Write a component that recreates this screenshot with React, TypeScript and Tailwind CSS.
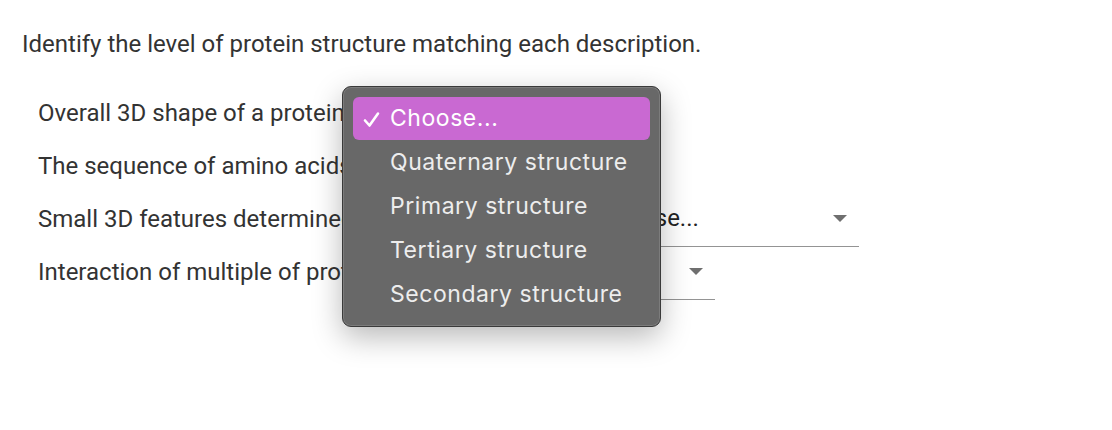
const options = ['Quaternary structure', 'Primary structure', 'Tertiary structure', 'Secondary structure']

const rows = [
  { label: 'Overall 3D shape of a protein' },
  { label: 'The sequence of amino acids' },
  { label: 'Small 3D features determined by hydrogen bonding' },
  { label: 'Interaction of multiple of protein units' },
]

function Select() {
  return (
    <div className="ml-[12px] flex h-[56px] w-[264px] shrink-0 items-center justify-between border-b border-[#949494] pl-1 pr-[12px] text-[24px] text-[#222]">
      <span>Choose...</span>
      <svg width="14" height="8" viewBox="0 0 14 8" className="mt-[2px]">
        <path d="M0 0h14L7 7z" fill="#6f6f6f" />
      </svg>
    </div>
  )
}

function Menu() {
  return (
    <div className="absolute left-[342px] top-[86px] w-[319px] rounded-[9px] border border-[#3a3a3a] bg-[#686868] p-[10px] shadow-[0_10px_30px_rgba(0,0,0,0.28)] ring-1 ring-inset ring-[#7c7c7c] font-['Inter',sans-serif] text-[23px] tracking-[0.55px]">
      <div className="flex h-[43px] items-center rounded-[6px] bg-[#c969d2] pl-[9px] text-white">
        <svg width="20" height="20" viewBox="0 0 20 20" className="mr-[8px] mt-[3px]">
          <path d="M3 10.5l4.5 5L16 3.5" fill="none" stroke="white" strokeWidth="2.6" strokeLinecap="round" strokeLinejoin="round" />
        </svg>
        Choose...
      </div>
      {options.map((o) => (
        <div key={o} className="flex h-[44px] items-center pl-[37px] text-[#ededed]">
          {o}
        </div>
      ))}
    </div>
  )
}

export default function App() {
  return (
    <div className="relative h-[430px] w-[1112px] overflow-hidden bg-white font-['Roboto',sans-serif] text-[#333]">
      <div className="px-[22px] pt-[30px]">
        <h1 className="text-[24px] leading-[28px]">
          Identify the level of protein structure matching each description.
        </h1>
        <div className="mt-[28px] flex flex-col pl-[16px]">
          {rows.map((r) => (
            <div key={r.label} className="flex h-[53px] items-center whitespace-nowrap text-[24px]">
              <span>{r.label}</span>
              <Select />
            </div>
          ))}
        </div>
      </div>
      <Menu />
    </div>
  )
}
